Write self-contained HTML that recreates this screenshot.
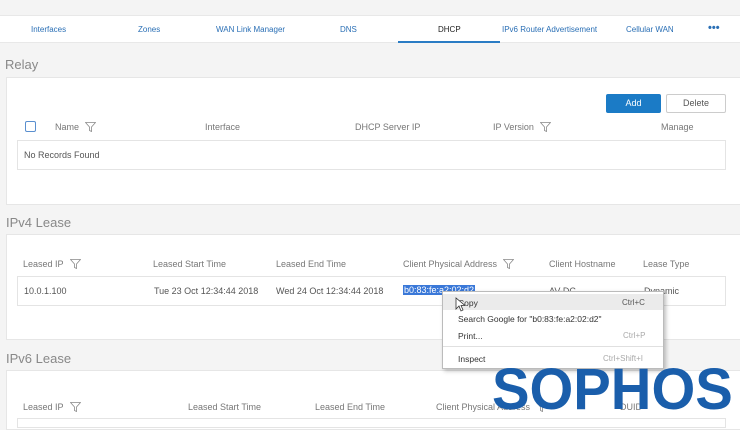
<!DOCTYPE html>
<html><head><style>
*{margin:0;padding:0;box-sizing:border-box}
body{width:740px;height:420px;overflow:hidden;background:#f4f4f4;font-family:"Liberation Sans",sans-serif;position:relative;color:#666}
.a{position:absolute;white-space:nowrap}
.tab{font-size:8px;color:#2a6fb5;top:25px}
.h{font-size:13px;color:#888}
.panel{position:absolute;background:#fff;border:1px solid #e6e6e6}
.box{position:absolute;border:1px solid #e4e4e4;background:#fff}
.c{font-size:9px;color:#777}
.d{font-size:9px;color:#555}
.f{display:inline-block;width:11px;height:10px;vertical-align:-2px;margin-left:6px}
.m{font-size:8.5px;color:#333}
.k{font-size:8px;color:#555}
</style></head><body>
<div class="a" style="left:0;top:15px;width:740px;height:28px;background:#fff;border-top:1px solid #e8e8e8;border-bottom:1px solid #e8e8e8"></div>
<div class="a tab" style="left:31px">Interfaces</div>
<div class="a tab" style="left:138px">Zones</div>
<div class="a tab" style="left:216px">WAN Link Manager</div>
<div class="a tab" style="left:340px">DNS</div>
<div class="a tab" style="left:438px;color:#222">DHCP</div>
<div class="a tab" style="left:502px">IPv6 Router Advertisement</div>
<div class="a tab" style="left:626px">Cellular WAN</div>
<div class="a tab" style="left:708px;font-weight:bold;top:22px;font-size:11px">•••</div>
<div class="a" style="left:398px;top:41px;width:102px;height:2px;background:#2a7cc4"></div>

<div class="a h" style="left:5px;top:57px">Relay</div>
<div class="panel" style="left:6px;top:77px;width:740px;height:128px"></div>
<div class="a" style="left:606px;top:94px;width:55px;height:19px;background:#1b7bc6;border-radius:2px;color:#fff;font-size:9px;text-align:center;line-height:19px">Add</div>
<div class="a" style="left:666px;top:94px;width:60px;height:19px;background:#fff;border:1px solid #ccc;border-radius:2px;color:#555;font-size:9px;text-align:center;line-height:17px">Delete</div>
<div class="a" style="left:25px;top:121px;width:11px;height:11px;border:1.5px solid #5a8fcf;border-radius:2px"></div>
<svg width="0" height="0" style="position:absolute"><defs><symbol id="fl" viewBox="0 0 11 10"><path d="M0.5 0.5H10.5L6.5 5V9.5L4.5 8.5V5Z" fill="none" stroke="#888" stroke-width="0.8"/></symbol></defs></svg>
<div class="a c" style="left:55px;top:122px">Name<svg class="f"><use href="#fl"/></svg></div>
<div class="a c" style="left:205px;top:122px">Interface</div>
<div class="a c" style="left:355px;top:122px">DHCP Server IP</div>
<div class="a c" style="left:493px;top:122px">IP Version<svg class="f"><use href="#fl"/></svg></div>
<div class="a c" style="left:661px;top:122px">Manage</div>
<div class="box" style="left:17px;top:140px;width:709px;height:30px"></div>
<div class="a d" style="left:24px;top:150px">No Records Found</div>

<div class="a h" style="left:6px;top:215px">IPv4 Lease</div>
<div class="panel" style="left:6px;top:234px;width:740px;height:106px"></div>
<div class="a c" style="left:23px;top:259px">Leased IP<svg class="f"><use href="#fl"/></svg></div>
<div class="a c" style="left:153px;top:259px">Leased Start Time</div>
<div class="a c" style="left:276px;top:259px">Leased End Time</div>
<div class="a c" style="left:403px;top:259px">Client Physical Address<svg class="f"><use href="#fl"/></svg></div>
<div class="a c" style="left:549px;top:259px">Client Hostname</div>
<div class="a c" style="left:643px;top:259px">Lease Type</div>
<div class="box" style="left:17px;top:276px;width:709px;height:30px"></div>
<div class="a d" style="left:24px;top:286px">10.0.1.100</div>
<div class="a d" style="left:154px;top:286px">Tue 23 Oct 12:34:44 2018</div>
<div class="a d" style="left:276px;top:286px">Wed 24 Oct 12:34:44 2018</div>
<div class="a d" style="left:403px;top:285px;background:#3a78d8;color:#fff;padding:0 1px">b0:83:fe:a2:02:d2</div>
<div class="a d" style="left:549px;top:286px">AV-DC</div>
<div class="a d" style="left:644px;top:286px">Dynamic</div>

<div class="a h" style="left:6px;top:351px">IPv6 Lease</div>
<div class="panel" style="left:6px;top:370px;width:740px;height:60px"></div>
<div class="a c" style="left:23px;top:402px">Leased IP<svg class="f"><use href="#fl"/></svg></div>
<div class="a c" style="left:188px;top:402px">Leased Start Time</div>
<div class="a c" style="left:315px;top:402px">Leased End Time</div>
<div class="a c" style="left:436px;top:402px">Client Physical Address<svg class="f"><use href="#fl"/></svg></div>
<div class="a c" style="left:620px;top:402px">DUID</div>
<div class="box" style="left:17px;top:418px;width:709px;height:10px"></div>

<div class="a" style="left:442px;top:291px;width:222px;height:78px;background:#fff;border:1px solid #bbb;box-shadow:2px 2px 4px rgba(0,0,0,.25)"></div>
<div class="a" style="left:443px;top:294px;width:220px;height:16px;background:#ebebeb"></div>
<div class="a m" style="left:458px;top:298px">Copy</div><div class="a k" style="left:622px;top:298px">Ctrl+C</div>
<div class="a m" style="left:458px;top:314px">Search Google for "b0:83:fe:a2:02:d2"</div>
<div class="a m" style="left:458px;top:331px">Print...</div><div class="a k" style="left:623px;top:331px;color:#aaa">Ctrl+P</div>
<div class="a" style="left:443px;top:346px;width:220px;height:1px;background:#e0e0e0"></div>
<div class="a m" style="left:458px;top:354px">Inspect</div><div class="a k" style="left:603px;top:354px;color:#aaa">Ctrl+Shift+I</div>
<svg class="a" style="left:455px;top:297px" width="10" height="15"><path d="M1 1V12L4 9L6 14L8 13L6 8.5H10Z" fill="#fff" stroke="#333" stroke-width="0.8"/></svg>

<div class="a" style="left:492px;top:356px;font-size:58px;font-weight:bold;color:#1a5eab;letter-spacing:0px;transform:scaleX(0.97);transform-origin:left">SOPHOS</div>
</body></html>
